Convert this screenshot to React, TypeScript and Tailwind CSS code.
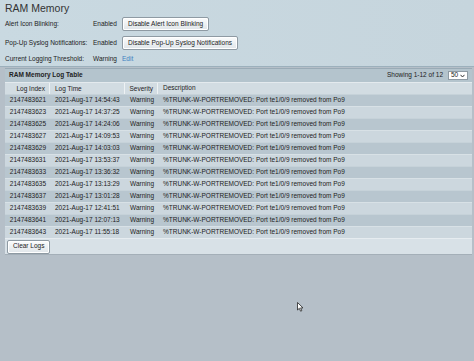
import * as React from "react"

const rows = [
  ["2147483621", "2021-Aug-17 14:54:43"],
  ["2147483623", "2021-Aug-17 14:37:25"],
  ["2147483625", "2021-Aug-17 14:24:06"],
  ["2147483627", "2021-Aug-17 14:09:53"],
  ["2147483629", "2021-Aug-17 14:03:03"],
  ["2147483631", "2021-Aug-17 13:53:37"],
  ["2147483633", "2021-Aug-17 13:36:32"],
  ["2147483635", "2021-Aug-17 13:13:29"],
  ["2147483637", "2021-Aug-17 13:01:28"],
  ["2147483639", "2021-Aug-17 12:41:51"],
  ["2147483641", "2021-Aug-17 12:07:13"],
  ["2147483643", "2021-Aug-17 11:55:18"],
]

const btn =
  "h-[14px] whitespace-nowrap px-[5px] rounded-[2px] border border-[#8e9aa3] bg-gradient-to-b from-[#fbfcfd] to-[#dfe5e9] text-[6.5px] leading-none text-[#222] shadow-[inset_0_0_0_1px_#ffffff]"

function SettingRow({ label, value, children }: { label: string; value: string; children: React.ReactNode }) {
  return (
    <div className="flex items-center">
      <span className="w-[88px]">{label}</span>
      <span className="w-[29px]">{value}</span>
      {children}
    </div>
  )
}

export default function App() {
  return (
    <div
      className="relative flex h-[361px] w-[474px] flex-col overflow-hidden bg-[#b5bfc8] text-[6.5px] leading-none text-[#222]"
      style={{ fontFamily: '"Liberation Sans", Arial, sans-serif' }}
    >
      {/* page header */}
      <div className="flex h-[67px] flex-col border-b border-[#9cb0bc] bg-gradient-to-r from-[#c9d9e1] to-[#c6d5dd] pl-[5px]">
        <div className="mt-[3px] text-[10.5px] leading-[11px] text-[#333]">RAM Memory</div>
        <div className="mt-[3px] flex flex-col gap-[5px]">
          <SettingRow label="Alert Icon Blinking:" value="Enabled">
            <button className={btn}>Disable Alert Icon Blinking</button>
          </SettingRow>
          <SettingRow label="Pop-Up Syslog Notifications:" value="Enabled">
            <button className={btn}>Disable Pop-Up Syslog Notifications</button>
          </SettingRow>
          <SettingRow label="Current Logging Threshold:" value="Warning">
            <span className="mt-[1px] text-[#3d7fc0]">Edit</span>
          </SettingRow>
        </div>
      </div>

      {/* log table panel */}
      <div className="ml-[5px] mr-[2px] mt-[1px] flex flex-col border-t border-[#9aabb6]">
        <div className="flex h-[13px] items-center justify-between bg-[#b4c4cd] pl-[4px] pr-[4px]">
          <span className="font-bold text-[#222]">RAM Memory Log Table</span>
          <div className="flex items-center gap-[5px]">
            <span>Showing 1-12 of 12</span>
            <div className="flex h-[9px] w-[20px] items-center justify-between border border-[#8e9aa3] bg-white px-[2px]">
              <span>50</span>
              <svg width="5" height="4" viewBox="0 0 5 4">
                <path d="M0.5 0.8 L2.5 3 L4.5 0.8" fill="none" stroke="#333" strokeWidth="1" />
              </svg>
            </div>
          </div>
        </div>
        <div className="grid h-[12px] grid-cols-[45px_75px_33px_1fr] items-center bg-[#d2dce2] border-t border-[#e4eaee]">
          <span className="border-r border-[#eef2f4] pr-[4px] text-right leading-[11px]">Log Index</span>
          <span className="border-r border-[#eef2f4] pl-[5px] leading-[11px]">Log Time</span>
          <span className="border-r border-[#eef2f4] pr-[4px] text-right leading-[11px]">Severity</span>
          <span className="pl-[5px]">Description</span>
        </div>
        {rows.map(([idx, time], i) => (
          <div
            key={idx}
            className={
              "grid h-[12px] grid-cols-[45px_75px_33px_1fr] items-center border-t " +
              (i % 2 === 0 ? "bg-[#b8c6cf] border-[#c6d2d9]" : "bg-[#ccd7de] border-[#d8e1e6]")
            }
          >
            <span className="pr-[4px] text-right">{idx}</span>
            <span className="pl-[5px]">{time}</span>
            <span className="pr-[4px] text-right">Warning</span>
            <span className="pl-[5px]">%TRUNK-W-PORTREMOVED: Port te1/0/9 removed from Po9</span>
          </div>
        ))}
        <div className="flex h-[17px] items-center border-t border-[#e6ecf0] border-b border-b-[#a4afb8] bg-[#d8e1e7] pl-[2px]">
          <button className={btn + " h-[13px]"}>Clear Logs</button>
        </div>
      </div>

      {/* mouse pointer */}
      <svg className="absolute left-[297px] top-[302px]" width="7" height="10" viewBox="0 0 7 10">
        <path d="M0.5 0.5 L0.5 8 L2.3 6.3 L3.6 9.2 L4.8 8.7 L3.6 5.9 L6 5.9 Z" fill="#fff" stroke="#222" strokeWidth="0.8" />
      </svg>
    </div>
  )
}
